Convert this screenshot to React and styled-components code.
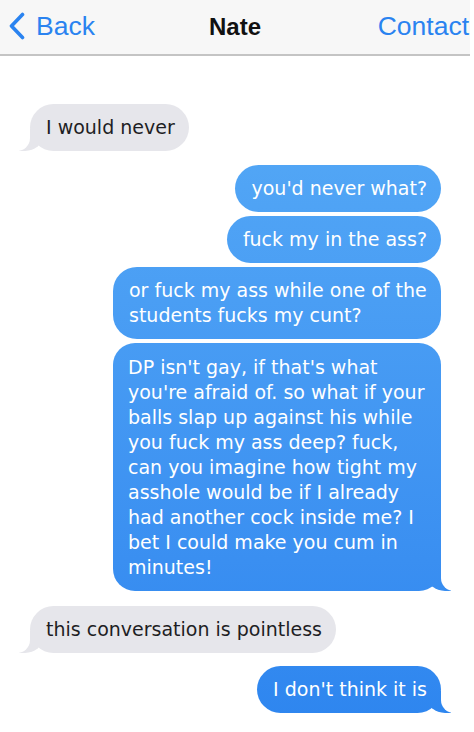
import React from "react";
import styled, { createGlobalStyle, css } from "styled-components";

const Global = createGlobalStyle`
  html, body { margin: 0; padding: 0; background: #ffffff; }
  body { width: 474px; height: 732px; overflow: hidden; }
`;

const Page = styled.div`
  width: 474px;
  height: 732px;
  display: flex;
  flex-direction: column;
  background: #ffffff;
`;

const NavBar = styled.header`
  height: 54px;
  flex: none;
  display: grid;
  grid-template-columns: 1fr auto 1fr;
  align-items: center;
  background: #f7f7f7;
  border-bottom: 2px solid #c4c4c4;
  margin-right: 4px;
  font-family: "Liberation Sans", Arial, sans-serif;
`;

const NavButton = styled.div`
  display: flex;
  align-items: center;
  gap: 10px;
  color: #2a83f0;
  font-size: 26.5px;
  justify-self: ${(p) => (p.$right ? "end" : "start")};
  padding: ${(p) => (p.$right ? "0 1px 2px 0" : "0 0 2px 8px")};
`;

const Title = styled.div`
  font-size: 24px;
  font-weight: bold;
  color: #111;
  padding-bottom: 1px;
`;

const Thread = styled.main`
  display: flex;
  flex-direction: column;
  padding: 48px 33px 0 30px;
  font-family: "DejaVu Sans", Verdana, sans-serif;
`;

const blueFill = css`
  background: linear-gradient(180deg, #5aaef7 0px, #4a9ef4 300px, #3a8ff1 560px, #2d85ef 732px) fixed;
`;

const Bubble = styled.div`
  position: relative;
  white-space: nowrap;
  box-sizing: border-box;
  ${(p) => p.$width && `width: ${p.$width}px;`}
  padding: 11px 14px 11px 16px;
  border-radius: 24px;
  font-size: 19px;
  line-height: 25px;
  margin-top: ${(p) => p.$gap}px;
  align-self: ${(p) => (p.$me ? "flex-end" : "flex-start")};
  color: ${(p) => (p.$me ? "#ffffff" : "#1e1e24")};
  ${(p) => (p.$me ? blueFill : "background: #e6e6eb;")}
  ${(p) => p.$big && "border-radius: 22px; padding-top: 12px; padding-left: 15px;"}

  ${(p) =>
    p.$tail &&
    (p.$me
      ? css`
          &::before {
            content: "";
            position: absolute;
            bottom: 0;
            right: -10px;
            width: 24px;
            height: 22px;
            ${blueFill}
            border-bottom-left-radius: 18px 15px;
          }
          &::after {
            content: "";
            position: absolute;
            bottom: 0;
            right: -30px;
            width: 30px;
            height: 24px;
            background: #ffffff;
            border-bottom-left-radius: 13px;
          }
        `
      : css`
          &::before {
            content: "";
            position: absolute;
            bottom: 0;
            left: -11px;
            width: 24px;
            height: 22px;
            background: #e6e6eb;
            border-bottom-right-radius: 18px 15px;
          }
          &::after {
            content: "";
            position: absolute;
            bottom: 0;
            left: -30px;
            width: 30px;
            height: 24px;
            background: #ffffff;
            border-bottom-right-radius: 13px;
          }
        `)}
`;

const Chevron = () => (
  <svg width="18" height="28" viewBox="0 0 18 28" aria-hidden="true">
    <path
      d="M14.5 2.5 L3.5 14 L14.5 25.5"
      fill="none"
      stroke="#2a83f0"
      strokeWidth="3.6"
      strokeLinecap="round"
      strokeLinejoin="round"
    />
  </svg>
);

const messages = [
  { me: false, gap: 0, tail: true, text: ["I would never"] },
  { me: true, gap: 14, text: ["you'd never what?"] },
  { me: true, gap: 4, text: ["fuck my in the ass?"] },
  { me: true, gap: 4, width: 328, text: ["or fuck my ass while one of the", "students fucks my cunt?"] },
  {
    me: true,
    gap: 4,
    tail: true,
    big: true,
    width: 328,
    text: [
      "DP isn't gay, if that's what",
      "you're afraid of. so what if your",
      "balls slap up against his while",
      "you fuck my ass deep? fuck,",
      "can you imagine how tight my",
      "asshole would be if I already",
      "had another cock inside me? I",
      "bet I could make you cum in",
      "minutes!",
    ],
  },
  { me: false, gap: 15, tail: true, text: ["this conversation is pointless"] },
  { me: true, gap: 13, tail: true, text: ["I don't think it is"] },
];

export default function App() {
  return (
    <Page>
      <Global />
      <NavBar>
        <NavButton>
          <Chevron />
          <span>Back</span>
        </NavButton>
        <Title>Nate</Title>
        <NavButton $right>Contact</NavButton>
      </NavBar>
      <Thread>
        {messages.map((m, i) => (
          <Bubble key={i} $me={m.me} $gap={m.gap} $tail={m.tail} $big={m.big} $width={m.width}>
            {m.text.map((line, j) => (
              <React.Fragment key={j}>
                {j > 0 && <br />}
                {line}
              </React.Fragment>
            ))}
          </Bubble>
        ))}
      </Thread>
    </Page>
  );
}
